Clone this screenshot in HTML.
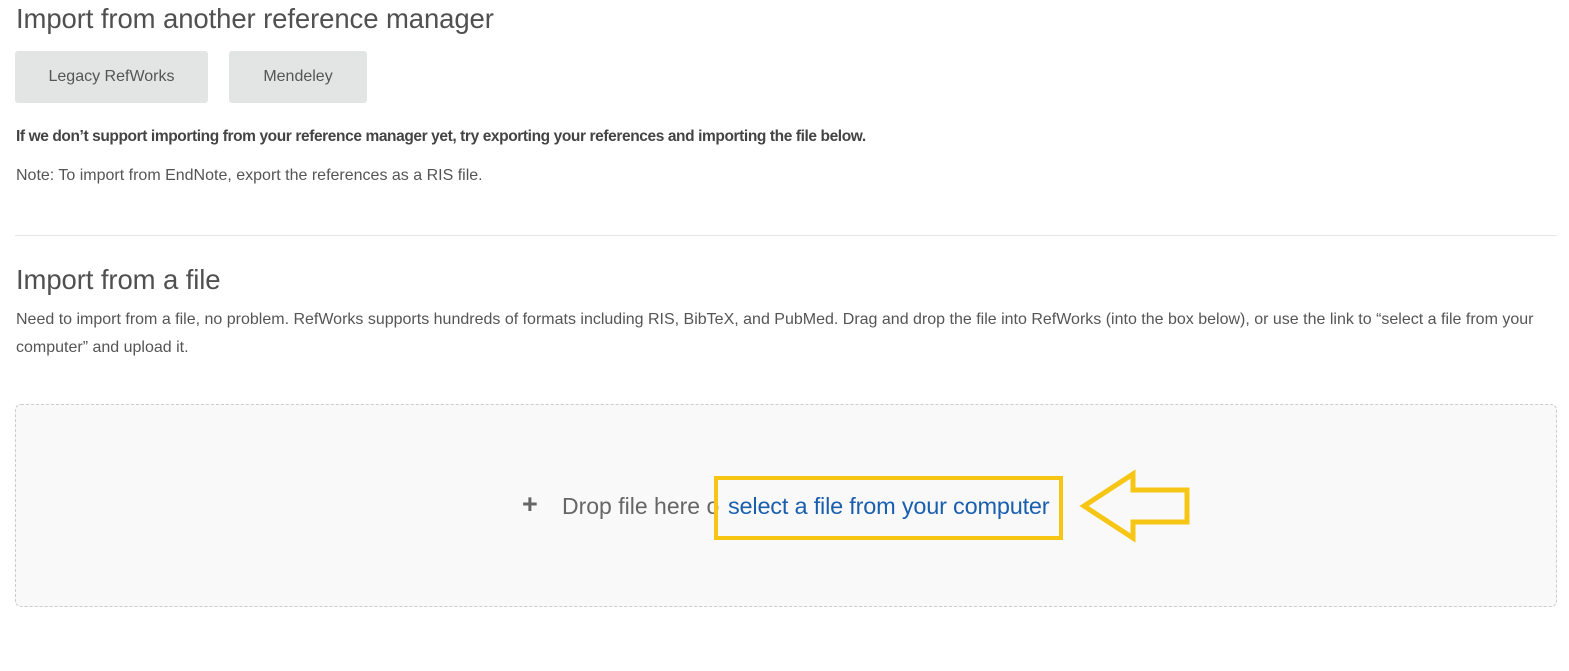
<!DOCTYPE html>
<html><head><style>
body{margin:0;width:1569px;height:671px;background:#fff;font-family:"Liberation Sans",sans-serif;color:#555;position:relative;overflow:hidden}
.a{position:absolute;white-space:nowrap}
h2{font-weight:normal;font-size:27.5px;margin:0;color:#505050;letter-spacing:-0.1px}
.btn{position:absolute;top:51px;height:52px;background:#e3e4e4;border-radius:3px;font-size:16px;color:#555;display:flex;align-items:center;justify-content:center}
p{margin:0;font-size:16px;color:#555;letter-spacing:0}
</style></head><body>
<h2 class="a" style="left:16px;top:3px">Import from another reference manager</h2>
<div class="btn" style="left:15px;width:193px">Legacy RefWorks</div>
<div class="btn" style="left:229px;width:138px">Mendeley</div>
<p class="a" style="left:16px;top:128px;font-weight:bold;color:#444;font-size:15.5px;letter-spacing:-0.4px">If we don’t support importing from your reference manager yet, try exporting your references and importing the file below.</p>
<p class="a" style="left:16px;top:167px">Note: To import from EndNote, export the references as a RIS file.</p>
<div class="a" style="left:15px;top:235px;width:1542px;height:1px;background:#e6e6e6"></div>
<h2 class="a" style="left:16px;top:264px">Import from a file</h2>
<p class="a" style="left:16px;top:306px;line-height:28px;white-space:normal;width:1535px">Need to import from a file, no problem. RefWorks supports hundreds of formats including RIS, BibTeX, and PubMed. Drag and drop the file into RefWorks (into the box below), or use the link to “select a file from your computer” and upload it.</p>
<div class="a" style="left:15px;top:404px;width:1540px;height:201px;border:1px dashed #ccc;border-radius:6px;background:#f9f9f9"></div>
<div class="a" style="left:522px;top:489px;font-size:27px;font-weight:bold;color:#666">+</div>
<div class="a" style="left:562px;top:493px;font-size:23px;color:#666">Drop file here o</div>
<div class="a" style="left:728px;top:493px;font-size:23.5px;color:#1a5fae;letter-spacing:-0.2px">select a file from your computer</div>
<div class="a" style="left:714px;top:476px;width:341px;height:56px;border:4px solid #f7c615"></div>
<svg class="a" style="left:0;top:0" width="1569" height="671"><polygon points="1084,506 1133,474 1133,490 1187,490 1187,522 1133,522 1133,538" fill="none" stroke="#f7c615" stroke-width="5" stroke-linejoin="miter"/></svg>
</body></html>
